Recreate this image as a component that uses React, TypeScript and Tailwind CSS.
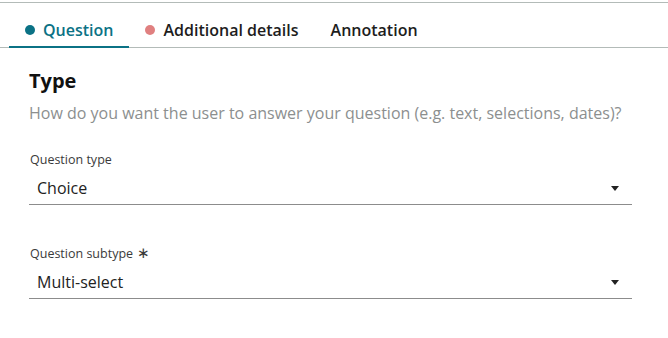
const font = { fontFamily: '"Open Sans", "Noto Sans", sans-serif' };

function Tab({ label, dot, active }: { label: string; dot?: string; active?: boolean }) {
  return (
    <div
      className={`flex items-center gap-2 h-[45px] pt-[10px] px-4 -mb-px border-b-2 ${
        active ? 'border-[#0b7285] text-[#0b7285]' : 'border-transparent text-[#1d1d1d]'
      }`}
    >
      {dot && <span className={`w-[10px] h-[10px] rounded-full ${dot}`} />}
      <span className="text-[16px] font-semibold">{label}</span>
    </div>
  );
}

function SelectField({ label, value, required }: { label: string; value: string; required?: boolean }) {
  return (
    <div className="flex flex-col">
      <label className="text-[12.5px] text-[#3a3a3a] pl-[1px] leading-[18px]">
        {label}
        {required && <span className="ml-1 text-[15px] leading-[18px]">∗</span>}
      </label>
      <div className="mt-[3px] flex items-center justify-between h-[33px] pl-[8px] pr-[13px] border-b border-[#8c8c8c] w-[603px]">
        <span className="text-[16px] text-[#222]">{value}</span>
        <svg width="8" height="5" viewBox="0 0 8 5">
          <path d="M0 0 H8 L4 5 Z" fill="#222" />
        </svg>
      </div>
    </div>
  );
}

export default function App() {
  return (
    <div className="w-[668px] h-[338px] bg-white pt-[2px]" style={font}>
      <div className="border-t border-[#b3bbb8]">
        <div className="flex pl-[9px] border-b border-[#b3bbb8]">
          <Tab label="Question" dot="bg-[#0b7285]" active />
          <Tab label="Additional details" dot="bg-[#e08080]" />
          <Tab label="Annotation" />
        </div>
        <div className="pl-[29px] pt-[19px]">
          <h2 className="text-[20px] font-bold text-[#111] leading-[28px]">Type</h2>
          <p className="mt-[6px] text-[16px] text-[#8c8f8f] leading-[24px]">
            How do you want the user to answer your question (e.g. text, selections, dates)?
          </p>
          <div className="mt-[26px]">
            <SelectField label="Question type" value="Choice" />
          </div>
          <div className="mt-[38px]">
            <SelectField label="Question subtype" value="Multi-select" required />
          </div>
        </div>
      </div>
    </div>
  );
}
